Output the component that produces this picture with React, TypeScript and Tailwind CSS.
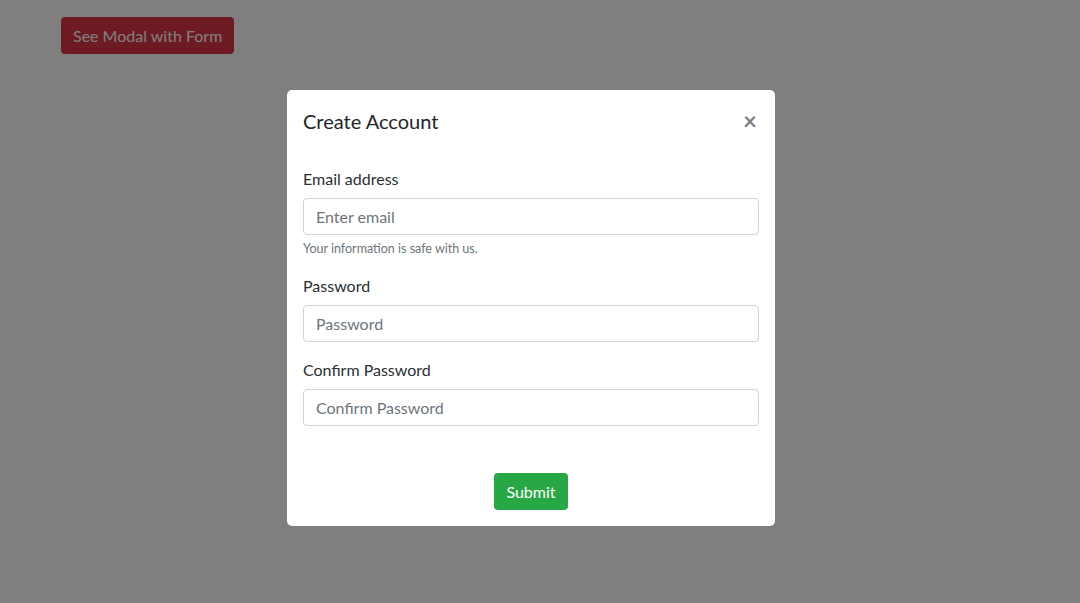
import React from 'react';

const font = { fontFamily: 'Lato, "Noto Sans", sans-serif' };

const Field = ({
  label,
  placeholder,
  type = 'text',
  help,
}: {
  label: string;
  placeholder: string;
  type?: string;
  help?: string;
}) => (
  <div className="mb-4 flex flex-col">
    <label className="mb-[7px] text-[16px] leading-6 text-[#2b2f33]">{label}</label>
    <input
      type={type}
      placeholder={placeholder}
      className="h-[37px] w-full rounded-[4px] border border-[#ced4da] bg-white px-3 text-[16px] text-[#495057] outline-none placeholder:text-[#6c757d]"
    />
    {help && <small className="mt-1 text-[12.5px] leading-[19px] text-[#6c757d]">{help}</small>}
  </div>
);

export default function App() {
  return (
    <div className="relative h-[603px] w-[1080px] overflow-hidden bg-white" style={font}>
      {/* page */}
      <div className="pl-[61px] pt-[17px]">
        <button className="h-[37px] rounded-[4px] bg-[#dc3545] px-3 text-[16px] text-white">
          See Modal with Form
        </button>
      </div>

      {/* backdrop + modal */}
      <div className="absolute inset-0 bg-black/50">
        <div className="ml-[287px] mt-[90px] w-[488px] rounded-[5px] bg-white">
          <div className="flex items-center justify-between px-4 pb-[15px] pt-4">
            <h5 className="text-[20px] leading-[30px] text-[#212529]">Create Account</h5>
            <button className="mr-[2px] text-[24px] font-bold leading-none text-[#808080]">×</button>
          </div>
          <div className="px-4 pt-4">
            <Field label="Email address" placeholder="Enter email" type="email" help="Your information is safe with us." />
            <Field label="Password" placeholder="Password" type="password" />
            <Field label="Confirm Password" placeholder="Confirm Password" type="password" />
          </div>
          <div className="flex justify-center pb-4 pt-[31px]">
            <button className="h-[37px] rounded-[4px] bg-[#28a745] px-3 text-[16px] text-white">Submit</button>
          </div>
        </div>
      </div>
    </div>
  );
}
